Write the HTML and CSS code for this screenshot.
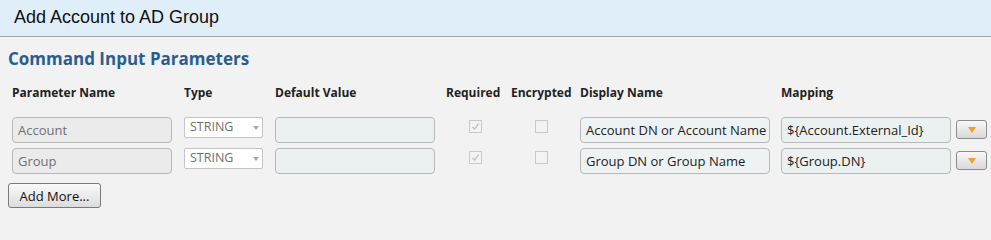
FILE: index.html
```html
<!DOCTYPE html>
<html lang="en">
<head>
<meta charset="utf-8">
<title>Add Account to AD Group</title>
<link rel="stylesheet" href="styles.css">
</head>
<body>
<div class="titlebar"><h1 class="title">Add Account to AD Group</h1></div>
<div class="content">
  <h2 class="section-title">Command Input Parameters</h2>
  <div class="params">
    <div class="hd">Parameter Name</div>
    <div class="hd">Type</div>
    <div class="hd">Default Value</div>
    <div class="hd">Required</div>
    <div class="hd">Encrypted</div>
    <div class="hd">Display Name</div>
    <div class="hd">Mapping</div>
    <div class="hd"></div>

    <div class="cell"><div class="field f-name disabled">Account</div></div>
    <div class="cell"><div class="select">STRING<span class="sel-arrow"></span></div></div>
    <div class="cell"><div class="field f-default"></div></div>
    <div class="cell"><span class="check chk-req"><svg viewBox="0 0 13 13" width="13" height="13"><path d="M3.5 6.8 L5.6 9.2 L9.5 3.6" fill="none" stroke="#b8b8b8" stroke-width="1.1"/></svg></span></div>
    <div class="cell"><span class="check chk-enc"></span></div>
    <div class="cell"><div class="field f-display">Account DN or Account Name</div></div>
    <div class="cell"><div class="field f-map">${Account.External_Id}</div></div>
    <div class="cell"><button class="drop-btn" type="button"><span class="tri"></span></button></div>

    <div class="cell"><div class="field f-name disabled">Group</div></div>
    <div class="cell"><div class="select">STRING<span class="sel-arrow"></span></div></div>
    <div class="cell"><div class="field f-default"></div></div>
    <div class="cell"><span class="check chk-req"><svg viewBox="0 0 13 13" width="13" height="13"><path d="M3.5 6.8 L5.6 9.2 L9.5 3.6" fill="none" stroke="#b8b8b8" stroke-width="1.1"/></svg></span></div>
    <div class="cell"><span class="check chk-enc"></span></div>
    <div class="cell"><div class="field f-display">Group DN or Group Name</div></div>
    <div class="cell"><div class="field f-map">${Group.DN}</div></div>
    <div class="cell"><button class="drop-btn" type="button"><span class="tri"></span></button></div>
  </div>
  <button class="add-more" type="button">Add More...</button>
</div>
</body>
</html>
```

FILE: styles.css
```css
html, body {
  margin: 0;
  padding: 0;
}
body {
  background: #f2f2f2;
  font-family: "Open Sans", "DejaVu Sans", sans-serif;
  color: #222;
  width: 991px;
  height: 238px;
  overflow: hidden;
}
.titlebar {
  height: 37px;
  background: #dfeef9;
  border-bottom: 1px solid #9ea8b1;
  box-sizing: border-box;
  display: flex;
  align-items: center;
  padding-left: 14px;
}
.title {
  margin: 0;
  font-family: "Liberation Sans", Arial, sans-serif;
  font-weight: normal;
  font-size: 18px;
  color: #111;
  padding-bottom: 1px;
}
.content {
  padding: 0 0 0 8px;
}
.section-title {
  margin: 10px 0 0 0;
  font-size: 17px;
  line-height: 24px;
  font-weight: 700;
  color: #2b5e90;
}
.params {
  display: grid;
  grid-template-columns: 172px 91px 171px 65px 69px 201px 175px 31px;
  grid-template-rows: 33px 31px 31px;
  margin: 13px 0 0 4px;
}
.hd {
  font-size: 12px;
  font-weight: 700;
  color: #222;
  line-height: 18px;
}
.cell {
  position: relative;
}
.field {
  box-sizing: border-box;
  height: 26px;
  border: 1px solid #b8b8b8;
  border-radius: 4px;
  font-size: 13px;
  line-height: 24px;
  padding: 0 5px;
  color: #222;
  white-space: nowrap;
  overflow: hidden;
}
.field.disabled {
  background: #ebebeb;
  color: #707070;
}
.f-name { width: 160px; }
.f-default { width: 160px; background: #ebf1f1; }
.f-display { width: 190px; background: #eff2f2; }
.f-map { width: 170px; background: #ebf1f1; }
.select {
  box-sizing: border-box;
  width: 79px;
  height: 21px;
  border: 1px solid #c4c4c4;
  border-radius: 2px;
  background: #fff;
  font-size: 12.5px;
  line-height: 17px;
  padding-left: 5px;
  padding-bottom: 2px;
  color: #707070;
  display: flex;
  align-items: center;
  justify-content: space-between;
}
.sel-arrow {
  width: 0;
  height: 0;
  border-left: 3.5px solid transparent;
  border-right: 3.5px solid transparent;
  border-top: 4px solid #a8a8a8;
  margin-right: 3px;
  margin-top: 3px;
}
.check {
  box-sizing: border-box;
  display: block;
  width: 13px;
  height: 13px;
  border: 1px solid #c9c9c9;
  background: #f3f3f3;
  margin-top: 3px;
}
.check svg {
  display: block;
  margin: -1px 0 0 -1px;
}
.chk-req { margin-left: 23px; }
.chk-enc { margin-left: 24px; }
.drop-btn {
  box-sizing: border-box;
  width: 31px;
  height: 19px;
  margin-top: 3px;
  padding: 0;
  border: 1px solid #8c8c8c;
  border-radius: 3px;
  background: linear-gradient(#f8f8f8, #d9d9d9);
  display: flex;
  align-items: center;
  justify-content: center;
}
.tri {
  width: 0;
  height: 0;
  border-left: 4px solid transparent;
  border-right: 4px solid transparent;
  border-top: 6px solid #eea22a;
}
.add-more {
  display: block;
  margin-top: 4px;
  box-sizing: border-box;
  width: 93px;
  height: 25px;
  border: 1px solid #7a7a7a;
  border-radius: 3px;
  background: linear-gradient(#fafafa, #dcdcdc);
  font-family: "Open Sans", sans-serif;
  font-size: 13px;
  color: #111;
  padding: 0;
}
```
